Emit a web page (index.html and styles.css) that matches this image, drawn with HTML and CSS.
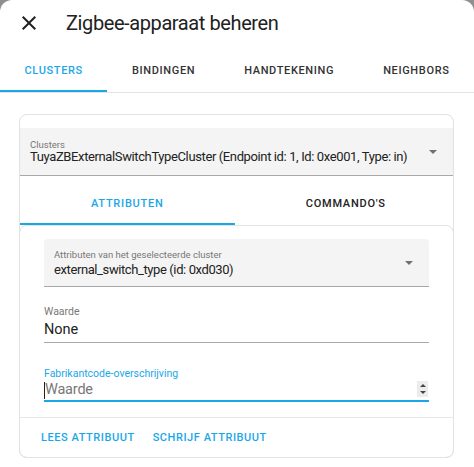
FILE: index.html
```html
<!DOCTYPE html>
<html>
<head>
<meta charset="utf-8">
<link rel="stylesheet" href="styles.css">
</head>
<body>
<div class="dialog">
  <header class="header">
    <span class="close">
      <svg width="24" height="24" viewBox="0 0 24 24"><path d="M19 6.41L17.59 5 12 10.59 6.41 5 5 6.41 10.59 12 5 17.59 6.41 19 12 13.41 17.59 19 19 17.59 13.41 12z" fill="#212121"/></svg>
    </span>
    <h1 class="title">Zigbee-apparaat beheren</h1>
  </header>
  <nav class="tabs">
    <div class="tab active">Clusters</div>
    <div class="tab">Bindingen</div>
    <div class="tab">Handtekening</div>
    <div class="tab">Neighbors</div>
  </nav>
  <main class="content">
    <section class="card">
      <div class="select select-full">
        <div class="select-text">
          <div class="select-label">Clusters</div>
          <div class="select-value">TuyaZBExternalSwitchTypeCluster (Endpoint id: 1, Id: 0xe001, Type: in)</div>
        </div>
        <span class="arrow"></span>
      </div>
      <div class="subtabs">
        <div class="subtab active">Attributen</div>
        <div class="subtab">Commando's</div>
      </div>
      <div class="inner-card">
        <div class="inner-body">
          <div class="select select-attr">
            <div class="select-text">
              <div class="select-label">Attributen van het geselecteerde cluster</div>
              <div class="select-value">external_switch_type (id: 0xd030)</div>
            </div>
            <span class="arrow"></span>
          </div>
          <div class="field">
            <div class="field-label">Waarde</div>
            <div class="field-value">None</div>
          </div>
          <div class="field focused">
            <div class="field-label">Fabrikantcode-overschrijving</div>
            <div class="field-row">
              <div class="field-value placeholder"><span class="caret"></span>Waarde</div>
              <span class="spinner"><span class="up"></span><span class="down"></span></span>
            </div>
          </div>
        </div>
        <div class="actions">
          <span class="btn">Lees attribuut</span>
          <span class="btn">Schrijf attribuut</span>
        </div>
      </div>
    </section>
  </main>
</div>
</body>
</html>
```

FILE: styles.css
```css
html {
  background: #8f8f8f;
}
body {
  margin: 0;
  font-family: Roboto, "Noto Sans", Arial, sans-serif;
  color: #212121;
}
.dialog {
  background: #fff;
  height: 467px;
  border-radius: 12px 12px 0 0;
  overflow: hidden;
}
.header {
  display: flex;
  align-items: center;
  height: 46px;
  padding-left: 17px;
}
.close {
  width: 24px;
  height: 24px;
  display: flex;
}
.title {
  margin: 0 0 0 25px;
  font-size: 20px;
  font-weight: 400;
  letter-spacing: -0.4px;
  color: #212121;
}
.tabs {
  display: flex;
  height: 44px;
  margin-top: 2px;
  border-bottom: 1px solid #e4e4e4;
}
.tab {
  flex: 1 1 auto;
  display: flex;
  align-items: center;
  justify-content: center;
  text-transform: uppercase;
  font-size: 11px;
  font-weight: 500;
  letter-spacing: 0.65px;
  color: #333;
  border-bottom: 2px solid transparent;
  padding-top: 2px;
}
.tab.active {
  color: #1aa7e8;
  border-bottom-color: #1aa7e8;
}
.content {
  padding: 21px 20px 0 19px;
}
.card {
  border: 1px solid #e2e2e2;
  border-radius: 8px;
  padding-top: 13px;
}
.select {
  display: flex;
  align-items: center;
  height: 47px;
  background: #f4f4f4;
  border-bottom: 1px solid #a8a8a8;
  border-radius: 4px 4px 0 0;
  padding: 0 16px 0 10px;
}
.select-full {
  border-radius: 0;
}
.select-text {
  flex: 1;
  min-width: 0;
}
.select-label {
  font-size: 9.5px;
  color: #777;
  line-height: 11px;
}
.select-value {
  font-size: 13px;
  letter-spacing: -0.38px;
  line-height: 14px;
  white-space: nowrap;
  color: #222;
}
.select-attr .select-text {
  padding-top: 2px;
}
.select-attr .select-label {
  line-height: 12px;
}
.select-attr .select-value {
  font-size: 13px;
  letter-spacing: -0.4px;
  line-height: 18px;
}
.arrow {
  width: 0;
  height: 0;
  border-left: 4.5px solid transparent;
  border-right: 4.5px solid transparent;
  border-top: 4.5px solid #707070;
}
.subtabs {
  display: flex;
  height: 49px;
}
.subtab {
  flex: 1;
  display: flex;
  align-items: center;
  justify-content: center;
  text-transform: uppercase;
  font-size: 11px;
  font-weight: 500;
  letter-spacing: 0.75px;
  color: #222;
  border-bottom: 2px solid transparent;
  padding-top: 8px;
}
.subtab.active {
  color: #1aa7e8;
  border-bottom-color: #1aa7e8;
  margin-right: 4px;
}
.inner-card {
  margin: 0 -1px -1px;
  border: 1px solid #e2e2e2;
  border-radius: 8px;
}
.inner-body {
  padding: 13px 24px 15px 24px;
}
.field {
  margin-top: 18px;
  border-bottom: 1px solid #a8a8a8;
  padding-bottom: 1px;
}
.field + .field {
  margin-top: 24px;
}
.field-label {
  font-size: 10.5px;
  color: #777;
  line-height: 14px;
}
.field-value {
  font-size: 14.5px;
  line-height: 22px;
  color: #222;
  display: flex;
  align-items: center;
}
.field.focused {
  border-bottom: 2px solid #1aa7e8;
  padding-bottom: 0;
}
.field.focused .field-label {
  color: #1aa7e8;
}
.field.focused .field-value {
  line-height: 20px;
  margin-top: -1px;
}
.field-row {
  display: flex;
  align-items: center;
  justify-content: space-between;
}
.placeholder {
  color: #777;
  letter-spacing: -0.2px;
}
.caret {
  width: 1px;
  height: 17px;
  background: #222;
}
.spinner {
  width: 11px;
  height: 16px;
  background: #ececec;
  display: flex;
  flex-direction: column;
  align-items: center;
  justify-content: center;
  gap: 4px;
  margin-top: -4px;
  margin-right: 1px;
}
.spinner .up {
  border-left: 3px solid transparent;
  border-right: 3px solid transparent;
  border-bottom: 3px solid #444;
}
.spinner .down {
  border-left: 3px solid transparent;
  border-right: 3px solid transparent;
  border-top: 3px solid #444;
}
.actions {
  border-top: 1px solid #e8e8e8;
  height: 39px;
  display: flex;
  align-items: center;
  gap: 18px;
  padding-left: 21px;
}
.btn {
  text-transform: uppercase;
  font-size: 11px;
  font-weight: 500;
  letter-spacing: 0.55px;
  color: #1aa7e8;
}
```
